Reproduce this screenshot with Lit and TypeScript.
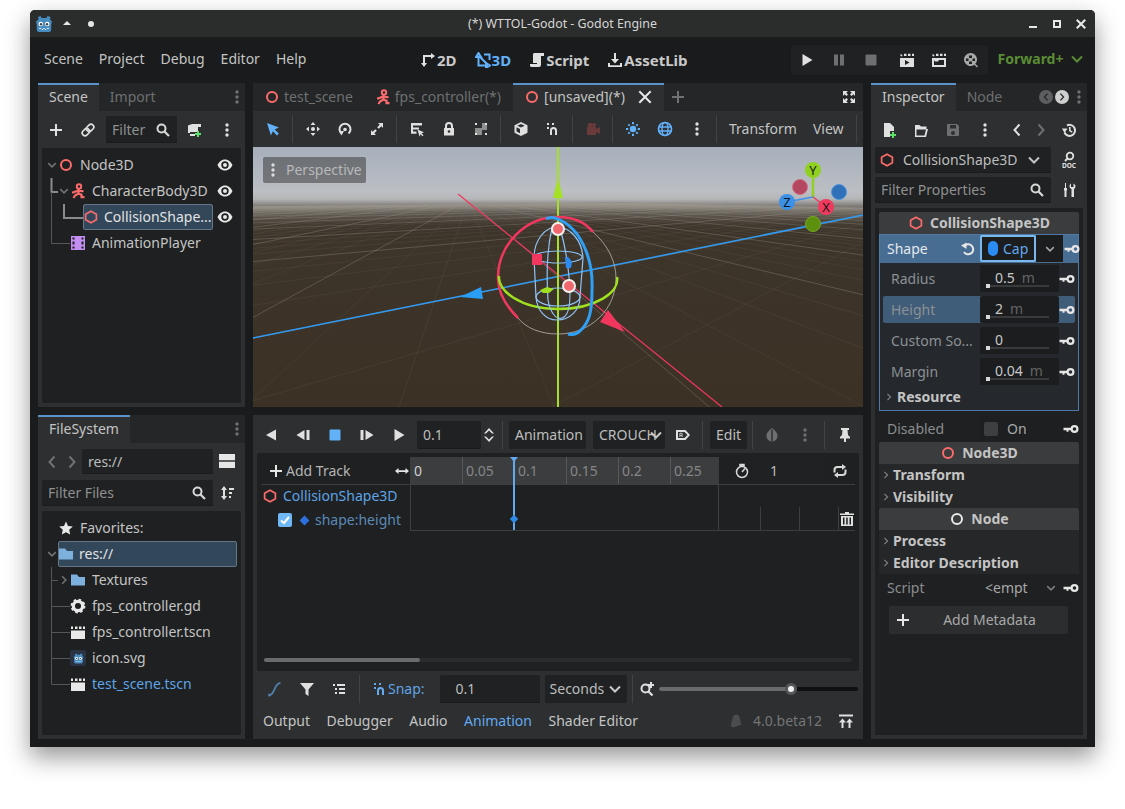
import { LitElement, css, html, svg } from 'lit';
import { customElement } from 'lit/decorators.js';

// icons, all on a 16x16 box
const I = {
  plus: svg`<path d="M7 2h2v5h5v2H9v5H7V9H2V7h5z"/>`,
  link: svg`<g transform="rotate(-45 8 8)" fill="none" stroke="currentColor" stroke-width="1.7"><rect x="1" y="5.2" width="8" height="5.6" rx="2.8"/><rect x="7" y="5.2" width="8" height="5.6" rx="2.8"/></g>`,
  search: svg`<circle cx="6.5" cy="6.5" r="4" fill="none" stroke="currentColor" stroke-width="2"/><path d="M9.5 9.5l4.5 4.5" stroke="currentColor" stroke-width="2.2" fill="none"/>`,
  dots: svg`<circle cx="8" cy="3" r="1.7"/><circle cx="8" cy="8" r="1.7"/><circle cx="8" cy="13" r="1.7"/>`,
  scrollAdd: svg`<path d="M5 2h9v3h-3v5H3V11H1V3.500zM3 12h5v2H3z"/><path fill="#5fe06a" d="M10 9h2v2h2v2h-2v2h-2v-2H8v-2h2z"/>`,
  eye: svg`<path fill-rule="evenodd" d="M8 2.500C4.500 2.500 1.800 5 .5 8c1.300 3 4 5.500 7.500 5.500S14.200 11 15.500 8C14.200 5 11.500 2.500 8 2.500zm0 1.800a3.700 3.700 0 110 7.400 3.700 3.700 0 010-7.400zm0 1.700a2 2 0 100 4 2 2 0 000-4z"/>`,
  ring: svg`<circle cx="8" cy="8" r="5" fill="none" stroke="currentColor" stroke-width="2"/>`,
  hex: svg`<path d="M8 2.200l5.400 3v5.600L8 13.800l-5.400-3V5.200z" fill="none" stroke="currentColor" stroke-width="1.700"/>`,
  body: svg`<circle cx="9" cy="3.500" r="2.200" fill="none" stroke="currentColor" stroke-width="2"/><path d="M8.500 6v4.500M2 9.500c2.500 0 3.500-1.700 6.500-1.700 2 0 3 .7 5 .2M8.500 10.500L5 12.500l-1.500 2.500M8.500 10.500l3 1.200 0 2.500 3 0" fill="none" stroke="currentColor" stroke-width="2.200"/>`,
  film: svg`<path fill-rule="evenodd" d="M1 1h14v14H1zm1.500 1.500v2h2v-2zm0 4v3h2v-3zm0 5v2h2v-2zm9-9v2h2v-2zm0 4v3h2v-3zm0 5v2h2v-2z"/>`,
  select: svg`<path d="M2 2l12 4.500-4.300 2 4.100 4.100-1.800 1.800-4.100-4.100-2 4.300z"/>`,
  move: svg`<circle cx="8" cy="8" r="2"/><path d="M8 1l2.500 3h-5zM8 15l-2.500-3h5zM1 8l3-2.500v5zM15 8l-3 2.500v-5z"/>`,
  rotate: svg`<path d="M4.500 12.500A5.500 5.500 0 1 1 11.500 12.500" fill="none" stroke="currentColor" stroke-width="2"/><circle cx="8" cy="8.500" r="1.800"/><path d="M2 10h5l-2.500 4.500z"/>`,
  scale: svg`<path d="M9 2h5v5l-1.700-1.700-2.500 2.500-1.600-1.600 2.500-2.500zM7 14H2V9l1.700 1.700 2.500-2.500 1.600 1.600-2.500 2.500z"/>`,
  listSel: svg`<path d="M2 2h11v2.500H4v2h6v2H4v2h3.500v2.200H2z"/><path d="M8.500 8.500l6.500 2.800-2.500 1 2 2-1 1-2-2-1 2.500z"/>`,
  lock: svg`<path d="M3 7h10v7.500H3z"/><path d="M5 7.500V5a3 3 0 016 0v2.500" fill="none" stroke="currentColor" stroke-width="2"/><circle cx="8" cy="10.500" r="1.300" fill="#2d2f30"/>`,
  group: svg`<path d="M2 7h7V2h5v7H9v5H2z" opacity=".55"/><path d="M2 2h2v2H2zM12 12h2v2h-2zM12 2h2v2h-2zM2 12h2v2H2z"/>`,
  cube: svg`<path fill-rule="evenodd" d="M8 1l6.500 3.200v7.600L8 15l-6.500-3.200V4.200zM4.300 4.700L8 6.600l3.700-1.900L8 3zM3.500 6.300v4.200l3.500 1.700V8z"/>`,
  snap: svg`<path d="M6 14V9.500a2.500 2.500 0 015 0V14" fill="none" stroke="currentColor" stroke-width="2"/><path d="M2 2h2v2H2zM7 2h2v2H7zM2 6h2v2H2z"/>`,
  cam: svg`<path d="M2 6h9v8H2zM11 8l4-2v7l-4-2z"/><circle cx="5" cy="4" r="2.300"/><circle cx="9" cy="4" r="2"/>`,
  sun: svg`<circle cx="8" cy="8" r="3.200"/><path d="M7 1h2v2.200H7zM7 12.800h2V15H7zM1 7h2.200v2H1zM12.800 7H15v2h-2.200zM2.700 4l1.300-1.300 1.400 1.400-1.300 1.300zM10.600 11.900l1.300-1.300 1.400 1.400-1.300 1.300zM2.700 12l1.400-1.400 1.300 1.300L4 13.300zM10.600 4.100L12 2.700 13.300 4l-1.400 1.400z"/>`,
  globe: svg`<g fill="none" stroke="currentColor" stroke-width="1.400"><circle cx="8" cy="8" r="6.500" stroke-width="1.700"/><ellipse cx="8" cy="8" rx="3" ry="6.500"/><path d="M1.500 6h13M1.500 10h13"/></g>`,
  full: svg`<path d="M2 2h5L5.300 3.700 7 5.400 5.400 7 3.700 5.300 2 7zM14 2v5l-1.700-1.700L10.600 7 9 5.400l1.700-1.700L9 2zM2 14V9l1.700 1.700L5.400 9 7 10.600l-1.700 1.700L7 14zM14 14H9l1.700-1.700L9 10.600l1.600-1.600 1.700 1.700L14 9z"/>`,
  close: svg`<path d="M3 1.600L8 6.600l5-5L14.400 3l-5 5 5 5-1.400 1.400-5-5-5 5L1.600 13l5-5-5-5z"/>`,
  play: svg`<path d="M3.500 2l10 6-10 6z"/>`,
  pause: svg`<path d="M3 2.500h4v11H3zM9 2.500h4v11H9z"/>`,
  stop: svg`<rect x="2.500" y="2.500" width="11" height="11" rx="1"/>`,
  clapPlay: svg`<path d="M1 6h14v9H1zM1.500 2l2 1-.5 1.500-1.500-.5zM5 1.800h2.500V4H5zM9 1.800h2.500V4H9zM13 1.800h2V4h-2z"/><path fill="#1f2122" d="M6 8l4.500 2.500L6 13z"/>`,
  clapOpen: svg`<path fill-rule="evenodd" d="M1 6h14v9H1zm2 2v5h10V8H8L7 9.500H4z"/><path d="M1.500 2l2 1-.5 1.500-1.500-.5zM5 1.800h2.500V4H5zM9 1.800h2.500V4H9zM13 1.800h2V4h-2z"/>`,
  clap: svg`<path d="M1 6.500h14V15H1zM1 2.500h2v2.500H1zM5 2.500h2.500V5H5zM9 2.500h2.500V5H9zM13 2.500h2V5h-2z"/>`,
  reel: svg`<path fill-rule="evenodd" d="M7.500 1a6.500 6.500 0 103.800 11.800l2.700 2.700 1-1-2.700-2.700A6.500 6.500 0 007.500 1zM6 3.500h3v2.500H6zm-3 3h2.500v2.500H3zm6.500 0H12v2.500H9.500zM6 9.500h3V12H6z"/>`,
  newFile: svg`<path d="M3 1h6l4 4v4H9v6H3z"/><path fill="#5fe06a" d="M11 10h2v2h2v2h-2v2h-2v-2H9v-2h2z"/>`,
  folderOpen: svg`<path fill-rule="evenodd" d="M2 3h4.500l1.500 1.500h5.500V7H15l-2 8H2zm1.500 4.500v6h8l1.500-6H7z"/>`,
  save: svg`<path fill-rule="evenodd" d="M2 3a1 1 0 011-1h9l2 2v9a1 1 0 01-1 1H3a1 1 0 01-1-1zm3 0v3.500h6V3zm3 6a2 2 0 100 4 2 2 0 000-4z"/>`,
  left: svg`<path d="M10.500 2.500L5.500 8l5 5.500" fill="none" stroke="currentColor" stroke-width="2"/>`,
  right: svg`<path d="M5.500 2.500l5 5.500-5 5.500" fill="none" stroke="currentColor" stroke-width="2"/>`,
  history: svg`<path d="M3.500 10.500A5.500 5.500 0 106 3.500" fill="none" stroke="currentColor" stroke-width="2"/><path d="M1 6.500h5.500L3.500 11zM8 5h1.600v3.200l2 1.300-.8 1.200L8 9z"/>`,
  tools: svg`<path d="M4 1h1v5h1v2L5.500 9v6h-2V9L3 8V6h1zM10 1.500V5h2.500V1.500C14.500 2.500 15 4.500 14 6l-1 1.200V15h-2.500V7.200L9 6C8 4.500 8.500 2.500 10 1.500z"/>`,
  revert: svg`<path d="M5 4.500A5 5 0 1 1 4 11" fill="none" stroke="currentColor" stroke-width="2"/><path d="M1 4.500l5.500-3v6.500z"/>`,
  key: svg`<path fill-rule="evenodd" d="M11.500 4a4 4 0 100 8 4 4 0 000-8zm0 2.200a1.800 1.800 0 110 3.600 1.800 1.800 0 010-3.600z"/><path d="M.5 6.800h8v2.400h-3v1.500h-2V9.200h-3z"/>`,
  star: svg`<path d="M8 1.500l2 4.500 4.800.5-3.600 3.200 1 4.800L8 12.200l-4.200 2.300 1-4.800L1.200 6.500 6 6z"/>`,
  folder: svg`<path d="M1 2.500h6l2 2.500h6v8.500H1z"/>`,
  gear: svg`<circle cx="8" cy="8" r="4.700" fill="none" stroke="currentColor" stroke-width="3.300"/><circle cx="8" cy="8" r="6.400" fill="none" stroke="currentColor" stroke-width="2" stroke-dasharray="2.500 2.500"/>`,
  sort: svg`<path d="M5 1l3 4H6v6h2l-3 4-3-4h2V5H2zM10 3h5v2h-5zM10 7h3v2h-3zM10 11h2v2h-2z"/>`,
  split: svg`<path d="M0 1h16v6.300H0zM0 8.700h16V15H0z"/>`,
  chevDown: svg`<path d="M3 5.500l5 5 5-5" fill="none" stroke="currentColor" stroke-width="2"/>`,
  chevRight: svg`<path d="M5.500 3l5 5-5 5" fill="none" stroke="currentColor" stroke-width="2"/>`,
  start: svg`<path d="M13 2.500v11L3 8z"/>`,
  prevFrame: svg`<path d="M9.500 3v10L1.500 8zM11.500 3h3v10h-3z"/>`,
  nextFrame: svg`<path d="M6.500 3v10l8-5zM1.500 3h3v10h-3z"/>`,
  updown: svg`<path d="M8 1l5 5.500h-2L8 3.500 5 6.500H3zM8 15l-5-5.500h2l3 3 3-3h2z"/>`,
  tag: svg`<path fill-rule="evenodd" d="M1 3h9.500L15 8l-4.500 5H1zm2 2v6h6.500l3-3-3-3zM4.500 10V6.500A1 1 0 015.500 5.800h1a1 1 0 011 .7V10H6.700V8.800H5.300V10zm.8-2h1.400V6.600H5.300z"/>`,
  onion: svg`<path d="M8 1c3 2.500 5.500 4.500 5.500 8 0 3-2.500 5.500-5.500 5.500S2.500 12 2.500 9C2.500 5.500 5 3.500 8 1z"/><path d="M8 2.500v12" stroke="#2d2f30" stroke-width="1.500"/>`,
  pin: svg`<path d="M4 1h8v2h-1.500l.5 5 2 2v1.500H3V10l2-2 .5-5H4zM7 11.500h2V15H7z"/>`,
  watch: svg`<circle cx="8" cy="9" r="5.500" fill="none" stroke="currentColor" stroke-width="1.500"/><path d="M6 1.500h4V3H6zM8 9l3-3.500" fill="none" stroke="currentColor" stroke-width="1.500"/>`,
  loop: svg`<path d="M2.500 9.500V7a3 3 0 013-3H11" fill="none" stroke="currentColor" stroke-width="2"/><path d="M10 1l4 3-4 3z"/><path d="M13.500 6.500V9a3 3 0 01-3 3H5" fill="none" stroke="currentColor" stroke-width="2"/><path d="M6 9l-4 3 4 3z"/>`,
  resize: svg`<path d="M0 8l4-3.500v2.500h8V4.500L16 8l-4 3.500V9H4v2.500z"/>`,
  trash: svg`<path d="M6 1h4v1.500h5V4H1V2.500h5zM2 5h12v10H2zm2 1.500v7h1.500v-7zm3.200 0v7h1.500v-7zm3.300 0v7H12v-7z" fill-rule="evenodd"/>`,
  bezier: svg`<path d="M2.500 14C8 14 7 2 13.500 2" fill="none" stroke="currentColor" stroke-width="1.800"/><circle cx="2.500" cy="14" r="1.500"/>`,
  funnel: svg`<path d="M1 2h14L9.500 8.500V15l-3-2V8.500z"/>`,
  treeList: svg`<path d="M2 3h2v2H2zM6 3h8v2H6zM4 7h2v2H4zM8 7h6v2H8zM4 11h2v2H4zM8 11h6v2H8z"/>`,
  zoom: svg`<circle cx="6.500" cy="7.500" r="4" fill="none" stroke="currentColor" stroke-width="2"/><path d="M9.500 10.500l4 4" stroke="currentColor" stroke-width="2.200"/><path d="M11 1h2v2h2v2h-2v2h-2V5H9V3h2z"/>`,
  bell: svg`<path d="M8 1.500c3 0 4 2.500 4 5.500l1.500 4.500-8 3-3-1.500C4 10 3.500 2 8 1.500z"/>`,
  expand: svg`<path d="M1 1.500h14v2H1zM4.500 5.500L8 9.500H5.500V15h-2V9.500H1zM11.500 5.500L15 9.500h-2.500V15h-2V9.500H8z"/>`,
  icon2d: svg`<path d="M4 13.500V4h7.500" fill="none" stroke="currentColor" stroke-width="2"/><path d="M11 1l4 3-4 3zM1 11h6l-3 4z"/>`,
  icon3d: svg`<path d="M3.500 3.500L12 12M3.500 4v9.500H13" fill="none" stroke="currentColor" stroke-width="2"/><path d="M1 5l2.500-4L6 5zM11 16v-5l4 2.500zM9 2.500h5.500V8" fill="none" stroke="currentColor" stroke-width="2"/>`,
  scroll: svg`<path d="M5 1h10v3h-3v9a2 2 0 01-2 2H2.500A1.500 1.500 0 011 13.500V12h7v-1H4V3a2 2 0 011-2z"/>`,
  download: svg`<path d="M7 1h2v6h3l-4 4.500L4 7h3zM1 11h2v2.200h10V11h2v4H1z"/>`,
};

const ic = (body: unknown, size = 16) => html`<svg class="ic" width=${size} height=${size} viewBox="0 0 16 16">${body}</svg>`;
const ib = (body: unknown, cls = '') => html`<span class="ib ${cls}">${ic(body)}</span>`;

const godot = (size: number) => html`<svg width=${size} height=${size} viewBox="0 0 18 18">
  <path fill="#478cbf" d="M5.500 1l1.200 2h4.600l1.200-2 3 1-.5 2.500L17 6.500l-.8 3.500v4.500q0 2-2 2.500H3.800q-2-.5-2-2.500V10L1 6.500l2.500-2L3 2z"/>
  <circle cx="5.800" cy="9" r="2.300" fill="#fff"/><circle cx="12.200" cy="9" r="2.300" fill="#fff"/>
  <circle cx="6" cy="9.200" r="1.200" fill="#414042"/><circle cx="12" cy="9.200" r="1.200" fill="#414042"/>
  <path d="M4 13.500h2l1 1h1l.5-1h1l.5 1h1l1-1h2" fill="none" stroke="#cfe3f3" stroke-width="1"/>
</svg>`;

// ground grid of the viewport: a real projection, camera looks at the origin
function groundGrid(): { near: string; far: string } {
  const f = 169, cx = 558, cy = 277, d = 3.25;
  const a = 0.45, p = 0.428;
  const ca = Math.cos(a), sa = Math.sin(a), cp = Math.cos(p), sp = Math.sin(p);
  const camX = -d * cp * sa, camZ = -d * cp * ca, camY = d * sp;
  const view = (x: number, z: number) => {
    const rx = x - camX, ry = -camY, rz = z - camZ;
    return {
      r: rx * ca - rz * sa,
      u: rx * sa * sp + ry * cp + rz * ca * sp,
      f: rx * sa * cp - ry * sp + rz * ca * cp,
    };
  };
  const seg = (x0: number, z0: number, x1: number, z1: number) => {
    let A = view(x0, z0), B = view(x1, z1);
    if (A.f < 0.1 && B.f < 0.1) return '';
    const clip = (P: typeof A, Q: typeof A) => {
      const t = (0.1 - P.f) / (Q.f - P.f);
      return { r: P.r + (Q.r - P.r) * t, u: P.u + (Q.u - P.u) * t, f: 0.1 };
    };
    if (A.f < 0.1) A = clip(A, B);
    if (B.f < 0.1) B = clip(B, A);
    const n = (v: number) => v.toFixed(1);
    return `M${n(cx + f * A.r / A.f)} ${n(cy - f * A.u / A.f)}L${n(cx + f * B.r / B.f)} ${n(cy - f * B.u / B.f)}`;
  };
  let near = '', far = '';
  const R = 64;
  for (let i = -R; i <= R; i += 1) {
    const big = i % 4 === 0;
    const line = seg(i, -R, i, R) + seg(-R, i, R, i);
    if (big) near += line; else far += line;
  }
  return { near, far };
}

const GRID = groundGrid();

@customElement('app-root')
export class AppRoot extends LitElement {
  static styles = css`
    :host { display: block; width: 1125px; height: 809px; background: #fff; padding: 10px 30px 0; box-sizing: border-box; font: 14px/20px "Noto Sans", sans-serif; color: #c4c4c4; overflow: hidden; }
    * { box-sizing: border-box; }
    .window { width: 1065px; height: 737px; background: #191b1c; border-radius: 5px 5px 0 0; box-shadow: 0 10px 24px rgba(0,0,0,.42); display: flex; flex-direction: column; }
    .ic { display: block; fill: currentColor; flex: none; }
    .ib { width: 32px; height: 32px; display: flex; align-items: center; justify-content: center; flex: none; color: #e0e0e0; }
    .ib.w16 { width: 16px; }
    .ib.w24 { width: 24px; }
    .ib.blue { color: #62b1f9; }
    .ib.dim { color: #6d6f70; }
    .sep { width: 1px; height: 28px; background: #414344; margin: 0 4px 0 3px; flex: none; }

    .title { height: 27px; background: #2b2c2c; border-radius: 5px 5px 0 0; display: grid; grid-template-columns: 1fr auto 1fr; align-items: center; font-size: 12.4px; color: #d6d6d6; }
    .title-l { display: flex; align-items: center; padding-left: 5px; color: #e6e6e6; }
    .title-l svg:first-child { margin-right: 6px; }
    .title-l .ic { margin-right: 8px; }
    .title-r { display: flex; justify-content: flex-end; align-items: center; gap: 8px; padding-right: 6px; color: #e6e6e6; }

    .menu { height: 46px; display: flex; align-items: center; flex: none; }
    .menus { width: 390px; padding-left: 14px; display: flex; gap: 16px; flex: none; margin-top: -3px; }
    .main-btns { display: flex; gap: 18px; flex: none; font-weight: 700; font-size: 15px; color: #c9c9c9; }
    .main-btn { display: flex; align-items: center; gap: 1px; }
    .main-btn .ic { color: #e0e0e0; }
    .main-btn.on, .main-btn.on .ic { color: #62b1f9; }
    .run { margin-left: 103px; width: 197px; height: 30px; background: #1f2122; border-radius: 3px; display: flex; align-items: center; flex: none; }
    .run .ib { height: 30px; }
    .run .gap { width: 4px; }
    .renderer { margin-left: 10px; display: flex; align-items: center; gap: 6px; color: #5b8b35; font-weight: 700; margin-top: -2px; }

    .grid { display: grid; grid-template-columns: 207px 610px 216px; grid-template-rows: 324px 324px; gap: 8px; padding: 0 8px; }
    .dock { background: #2d2f30; display: flex; flex-direction: column; min-height: 0; min-width: 0; position: relative; }
    .tabs { height: 28px; background: #242627; display: flex; align-items: center; flex: none; position: relative; }
    .tab { height: 28px; padding: 0 11px; display: flex; align-items: center; color: #6e7071; gap: 4px; flex: none; }
    .tab.on { background: #2d2f30; color: #c4c4c4; box-shadow: inset 0 2px 0 #5a93c9; }
    .tabs .more { margin-left: auto; color: #6f7172; width: 16px; margin-right: 0; }
    .tabs .ic.red, .red { color: #fc6b6b; }

    .bar { display: flex; align-items: center; flex: none; }
    .field { background: #1f2122; border-radius: 2px; box-shadow: inset 0 -1px 0 #191a1b; height: 26px; display: flex; align-items: center; padding: 0 6px; color: #8f9091; flex: none; }
    .field > .ic { margin-left: auto; color: #d8d8d8; }

    .tree { flex: 1; background: #1e2021; border-radius: 2px; margin: 0 4px 4px; padding-top: 4px; position: relative; min-height: 0; }
    .lines { position: absolute; left: 0; top: 0; width: 100%; height: 100%; pointer-events: none; }
    .row { height: 26px; display: flex; align-items: center; position: relative; }
    .chev { width: 12px; height: 12px; flex: none; color: #737475; }
    .lead { flex: none; }
    .row .tx { margin-left: 6px; white-space: nowrap; overflow: hidden; }
    .row .eye { margin-left: auto; margin-right: 8px; color: #e8e8e8; }
    .cell { display: flex; align-items: center; flex: 1; height: 26px; min-width: 0; }
    .cell.sel { background: #33475b; border: 1px solid #667686; border-radius: 2px; color: #e2e2e2; margin-right: 4px; }
    .cell.sel .lead { margin-left: -1px; }
    .cell.sel .tx { margin-left: 5px; }
    .white { color: #e8e8e8; }
    .folder { color: #7eb0de; }
    .film { color: #c38ef1; }
    .linktx { color: #5fa4e6; }

    .scene-bar { height: 37px; padding-left: 2px; }
    .scene-filter { width: 71px; margin: 0 2px; height: 27px; }
    .fs-path { height: 37px; padding-left: 4px; padding-top: 6px; align-items: flex-start; }
    .fs-path .ib { height: 25px; width: 20px; color: #6f7172; }
    .fs-path .field { width: 131px; height: 25px; color: #bdbdbd; }
    .split { color: #e6e6e6; margin-left: 6px; margin-top: 4px; }
    .fs-filter { height: 31px; padding: 0 0 5px 4px; }
    .fs-filter .field { width: 171px; }
    .fs-filter .sort { width: 28px; display: flex; justify-content: center; color: #e0e0e0; }
    .thumb { width: 16px; height: 16px; background: #2a3344; border-radius: 2px; display: flex; align-items: center; justify-content: center; flex: none; }

    .center { grid-column: 2; grid-row: 1; }
    .tabs .plus { color: #6f7172; margin-left: 2px; }
    .tabs .full { margin-left: auto; color: #e0e0e0; margin-right: -2px; }
    .tab.t-fps { padding: 0 12px 0 11px; }
    .t-name { width: 89px; }
    .tool3d { height: 36px; padding-left: 4px; }
    .menu-btn { padding: 0 8px; flex: none; }
    .vp { flex: 1; position: relative; min-height: 0; overflow: hidden; }
    .vp svg.scene { position: absolute; left: 0; top: 0; }
    .persp { position: absolute; left: 10px; top: 10px; width: 103px; height: 26px; background: rgba(60,60,60,.55); border-radius: 2px; display: flex; align-items: center; color: #b8b9ba; }
    .persp .ic { margin: 0 5px 0 2px; color: #dcdcdc; }

    .anim { grid-column: 2; grid-row: 2; }
    .anim-bar { height: 34px; padding: 6px 0 0 2px; }
    .anim-bar .ib { height: 28px; }
    .anim-bar .sep { height: 28px; }
    .time { width: 64px; height: 28px; margin-left: 2px; padding-left: 6px; color: #bdbdbd; }
    .sbtn { height: 28px; background: #1f2122; border-radius: 2px; padding: 0 6px; display: flex; align-items: center; flex: none; color: #bdbdbd; }
    .sbtn.a { width: 77px; }
    .sbtn.c { margin: 0 2px 0 7px; width: 72px; overflow: hidden; position: relative; }
    .sbtn.c span { position: absolute; left: 55px; top: 6px; color: #c8c8c8; }
    .sbtn.e { width: 37px; }
    .tracks { margin: 4px 4px 0; height: 218px; background: #1e2021; border-radius: 2px; padding: 4px 4px 0; position: relative; display: flex; flex-direction: column; flex: none; }
    .thead { display: flex; height: 28px; border-bottom: 1px solid #3c3e3f; flex: none; }
    .add { width: 149px; flex: none; display: flex; align-items: center; padding-left: 7px; gap: 2px; color: #b5b5b5; }
    .add .ic { color: #e6e6e6; }
    .add .rs { margin-left: auto; margin-right: 1px; }
    .ruler { display: flex; background: #3c3d3e; flex: none; width: 309px; }
    .tick { width: 52px; flex: none; border-left: 1px solid #575859; padding-left: 3px; color: #858687; line-height: 27px; }
    .tick.last { width: 49px; }
    .tick.zero { color: #cfcfcf; border-left: 0; padding-left: 4px; }
    .thead-r { display: flex; align-items: center; flex: 1; color: #d8d8d8; }
    .thead-r .watch { width: 34px; display: flex; justify-content: center; padding-left: 11px; }
    .len { width: 69px; height: 26px; background: #1f2122; padding-left: 17px; display: flex; align-items: center; color: #bdbdbd; }
    .thead-r .lp { margin-left: 10px; }
    .trow { display: flex; flex: none; }
    .tleft { width: 150px; border-right: 1px solid #3c3e3f; display: flex; align-items: center; flex: none; }
    .tgroup { height: 22px; }
    .tgroup .tleft { padding-left: 1px; gap: 5px; }
    .ttrack { height: 24px; }
    .ttrack .tleft { padding: 2px 0 0 17px; }
    .ttrack .name { color: #5b8ab8; margin-left: 7px; }
    .ttrack .span, .ttrack .rest { border-bottom: 1px solid #3c3e3f; }
    .check { width: 14px; height: 14px; background: #70b8f5; border-radius: 2px; display: flex; align-items: center; justify-content: center; }
    .diamond { width: 7px; height: 7px; background: #2e6fe0; transform: rotate(45deg); margin-left: 9px; flex: none; }
    .span { flex: none; border-right: 1px solid #3c3e3f; height: 100%; }
    .s308 { width: 308px; }
    .s42 { width: 42px; }
    .s39 { width: 39px; }
    .rest { flex: 1; display: flex; align-items: center; justify-content: flex-end; color: #e0e0e0; }
    .play-head { position: absolute; left: 256px; top: 4px; height: 73px; width: 2px; background: #62a9f0; }
    .play-head::before { content: ""; position: absolute; left: -3px; top: 0; border: 4px solid transparent; border-top: 5px solid #62a9f0; }
    .key-dot { position: absolute; left: 254px; top: 63px; width: 6px; height: 6px; background: #2e8ae6; transform: rotate(45deg); }
    .hscroll { margin: auto 3px 9px; height: 4px; background: #2a2c2d; border-radius: 2px; flex: none; }
    .hscroll i { display: block; height: 4px; width: 156px; background: #6a6b6c; border-radius: 2px; }
    .anim-foot { height: 34px; padding: 2px 0 0 6px; color: #5fa4e6; }
    .anim-foot .ib { width: 32px; }
    .anim-foot .snap-ic { width: 28px; margin-right: -6px; color: #62a9f0; }
    .anim-foot .zoom-ic { width: 24px; }
    .snap-v { width: 100px; height: 28px; margin-left: 15px; padding-left: 16px; color: #bdbdbd; }
    .secs { width: 82px; height: 28px; margin-left: 5px; padding-left: 5px; background: #1f2122; border-radius: 2px; display: flex; align-items: center; color: #bdbdbd; gap: 3px; flex: none; }
    .secs .ic { color: #c8c8c8; }
    .slider { width: 199px; height: 4px; background: #0f1010; border-radius: 2px; position: relative; flex: none; }
    .slider i { display: block; width: 131px; height: 4px; background: #6a6b6c; border-radius: 2px; }
    .slider b { position: absolute; left: 126px; top: -4px; width: 12px; height: 12px; border-radius: 50%; background: #f0f0f0; border: 3px solid #565758; }
    .bottom { display: flex; align-items: center; height: 28px; padding-left: 10px; gap: 16.5px; margin-top: 2px; }
    .bottom .on { color: #62a9f0; }
    .bottom .ver { margin-left: auto; color: #747576; display: flex; align-items: center; gap: 9px; }
    .bottom .ver .ic:first-child { color: #4a4c4d; }
    .bottom .ver .ic:last-child { color: #e0e0e0; margin-left: 7px; margin-right: 9px; }

    .insp { grid-column: 3; grid-row: 1 / 3; }
    .insp .tabs .hist { display: flex; align-items: center; margin-left: auto; gap: 0; }
    .round { width: 14px; height: 14px; border-radius: 50%; background: #5c5e5f; margin-right: 2px; display: flex; align-items: center; justify-content: center; color: #242627; }
    .round.b { background: #cfcfcf; }
    .insp-bar { height: 36px; padding: 2px 0 0 2px; }
    .ib.hist-btn { margin-left: 8px; width: 24px; }
    .wide { display: flex; align-items: center; padding-left: 4px; height: 26px; margin-bottom: 4px; flex: none; }
    .wide .field { width: 176px; }
    .wide .doc { width: 36px; display: flex; justify-content: center; color: #e0e0e0; }
    .wide .field.node { color: #bdbdbd; padding-left: 4px; }
    .wide .field.node .red { margin-right: 8px; }
    .wide .field.node > .ic { color: #c4c4c4; margin-right: 3px; }
    .props { flex: 1; margin: 1px 4px 4px; background: #1e2021; padding: 4px; min-height: 0; }
    .head { height: 22px; background: #3a3c3d; border-radius: 2px 2px 0 0; display: flex; align-items: center; justify-content: center; gap: 6px; font-weight: 700; color: #c4c4c4; }
    .group { border: 1px solid #4d7aa6; background: #25292d; margin-bottom: 5px; }
    .shape { height: 28px; padding: 0 0 1px 7px; background: #476d92; display: flex; align-items: center; color: #e4e8ec; margin-bottom: 2px; }
    .shape .lbl { width: 73px; flex: none; }
    .shape .rv { width: 16px; color: #e6e6e6; margin-right: 4px; flex: none; }
    .cap { width: 56px; height: 27px; background: #1b1d1e; border: 2px solid #7ab8ef; border-radius: 2px; display: flex; align-items: center; padding-left: 6px; gap: 5px; color: #62a9f0; flex: none; }
    .pill { width: 10px; height: 15px; background: #2a8bf2; border-radius: 5px; flex: none; }
    .dd { width: 27px; height: 27px; background: #1b1d1e; display: flex; align-items: center; justify-content: center; color: #a8a8a8; flex: none; }
    .keyic { flex: none; margin-left: 1px; color: #e6e6e6; }
    .prow { margin: 0 3px 4px; height: 27px; display: flex; align-items: center; border-radius: 2px; color: #8c9094; }
    .prow.hover { background: #3f5d79; }
    .prow .lbl { width: 97px; padding-left: 8px; flex: none; white-space: nowrap; }
    .prow .keyic { margin-left: 0; }
    .val { width: 79px; height: 27px; background: #1b1d1e; border-radius: 2px; position: relative; padding-left: 15px; display: flex; align-items: center; gap: 7px; color: #c8c8c8; flex: none; margin-top: -1px; }
    .val small { font-size: 14px; color: #636465; }
    .val::before { content: ""; position: absolute; left: 7px; bottom: 5px; width: 62px; height: 2px; background: #393a3b; }
    .val::after { content: ""; position: absolute; left: 6px; bottom: 4px; width: 4px; height: 4px; background: #d8d8d8; }
    .res { height: 26px; display: flex; align-items: center; padding-left: 4px; font-weight: 700; margin-top: -5px; gap: 3px; }
    .chv { color: #7d7e7f; }
    .disabled { height: 26px; display: flex; align-items: center; padding-left: 8px; color: #8c8d8e; }
    .disabled .lbl { width: 92px; flex: none; }
    .on-box { width: 84px; height: 26px; background: #1d1f20; display: flex; align-items: center; padding-left: 5px; gap: 9px; flex: none; color: #a8a8a8; }
    .cb { width: 14px; height: 14px; background: #3d3f40; border-radius: 2px; }
    .keyic.m { margin-left: 0; }
    .sec { background: #252728; }
    .sec div { height: 22px; display: flex; align-items: center; padding-left: 2px; gap: 2px; font-weight: 700; }
    .script { height: 26px; display: flex; align-items: center; padding-left: 8px; color: #8c8d8e; margin-top: 1px; }
    .script .lbl { width: 98px; flex: none; }
    .script .v { width: 60px; flex: none; color: #a8a8a8; }
    .script .ch { width: 18px; color: #7d7e7f; flex: none; }
    .meta { margin: 5px 0 0 10px; width: 179px; height: 28px; background: #2b2d2e; border-radius: 2px; display: flex; align-items: center; padding-left: 6px; color: #a8a8a8; }
    .meta span { flex: 1; text-align: center; }
    .meta .ic { color: #e6e6e6; }
  `;

  private treeLine(x0: number, y0: number, d: string, strong = false) {
    return svg`<path transform="translate(${-x0} ${-y0})" d=${d} fill="none" stroke=${strong ? '#8a8b8c' : '#555657'} stroke-width=${strong ? 2 : 1}/>`;
  }

  private sceneDock() {
    return html`<section class="dock">
      <div class="tabs">
        <div class="tab on">Scene</div><div class="tab">Import</div>
        <span class="ib more">${ic(I.dots)}</span>
      </div>
      <div class="bar scene-bar">
        ${ib(I.plus)}${ib(I.link)}
        <div class="field scene-filter">Filter${ic(I.search)}</div>
        ${ib(I.scrollAdd)}${ib(I.dots)}
      </div>
      <div class="tree">
        <svg class="lines">
          ${this.treeLine(42, 148, 'M51.500 178V192H58', true)}
          ${this.treeLine(42, 148, 'M51.500 192V243.500H70')}
          ${this.treeLine(42, 148, 'M64 204V218H83', true)}
        </svg>
        <div class="row" style="padding-left:4px">
          <span class="chev">${ic(I.chevDown, 12)}</span><span class="lead red">${ic(I.ring)}</span><span class="tx">Node3D</span>
          <span class="eye">${ic(I.eye)}</span>
        </div>
        <div class="row" style="padding-left:16px">
          <span class="chev">${ic(I.chevDown, 12)}</span><span class="lead red">${ic(I.body)}</span><span class="tx">CharacterBody3D</span>
          <span class="eye">${ic(I.eye)}</span>
        </div>
        <div class="row" style="padding-left:41px">
          <div class="cell sel"><span class="lead red">${ic(I.hex)}</span><span class="tx">CollisionShape...</span></div>
          <span class="eye" style="margin-left:0">${ic(I.eye)}</span>
        </div>
        <div class="row" style="padding-left:28px">
          <span class="lead film">${ic(I.film)}</span><span class="tx">AnimationPlayer</span>
        </div>
      </div>
    </section>`;
  }

  private fileDock() {
    const files = [
      { icon: html`<span class="lead white">${ic(I.gear)}</span>`, name: 'fps_controller.gd' },
      { icon: html`<span class="lead white">${ic(I.clap)}</span>`, name: 'fps_controller.tscn' },
      { icon: html`<span class="thumb">${godot(11)}</span>`, name: 'icon.svg' },
      { icon: html`<span class="lead white">${ic(I.clap)}</span>`, name: 'test_scene.tscn', cls: 'linktx' },
    ];
    return html`<section class="dock">
      <div class="tabs">
        <div class="tab on">FileSystem</div>
        <span class="ib more">${ic(I.dots)}</span>
      </div>
      <div class="bar fs-path">
        ${ib(I.left)}${ib(I.right)}
        <div class="field">res://</div>
        <span class="split">${ic(I.split)}</span>
      </div>
      <div class="bar fs-filter">
        <div class="field">Filter Files${ic(I.search)}</div>
        <span class="sort">${ic(I.sort)}</span>
      </div>
      <div class="tree">
        <svg class="lines">
          ${this.treeLine(42, 511, 'M51.500 567V684.500H70')}
          ${this.treeLine(42, 511, 'M51 580.500H58M51 606.500H70M51 632.500H70M51 658.500H70')}
        </svg>
        <div class="row" style="padding-left:16px">
          <span class="lead white">${ic(I.star)}</span><span class="tx">Favorites:</span>
        </div>
        <div class="row" style="padding-left:4px">
          <span class="chev">${ic(I.chevDown, 12)}</span>
          <div class="cell sel"><span class="lead folder">${ic(I.folder)}</span><span class="tx">res://</span></div>
        </div>
        <div class="row" style="padding-left:16px">
          <span class="chev">${ic(I.chevRight, 12)}</span><span class="lead folder">${ic(I.folder)}</span><span class="tx">Textures</span>
        </div>
        ${files.map(
          (f) => html`<div class="row" style="padding-left:28px">${f.icon}<span class="tx ${f.cls ?? ''}">${f.name}</span></div>`,
        )}
      </div>
    </section>`;
  }

  private viewport() {
    return html`<div class="vp">
      <svg class="scene" width="610" height="260" viewBox="253 147 610 260">
        <defs>
          <linearGradient id="env" x1="0" y1="147" x2="0" y2="407" gradientUnits="userSpaceOnUse">
            <stop offset="0" stop-color="#a6afbb"/>
            <stop offset=".17" stop-color="#bcbfc4"/>
            <stop offset=".2" stop-color="#b5b6b7"/>
            <stop offset=".245" stop-color="#5c564f"/>
            <stop offset=".3" stop-color="#3d352b"/>
            <stop offset="1" stop-color="#3c3125"/>
          </linearGradient>
          <clipPath id="ground"><rect x="253" y="201" width="610" height="206"/></clipPath>
        </defs>
        <rect x="253" y="147" width="610" height="260" fill="url(#env)"/>
        <g clip-path="url(#ground)" fill="none">
          <path d=${GRID.far} stroke="#8f8a82" stroke-opacity=".16" stroke-width=".7"/>
          <path d=${GRID.near} stroke="#a19c94" stroke-opacity=".4" stroke-width=".8"/>
        </g>
        <!-- axes -->
        <path d="M253 338L863 215" stroke="#2f9bf5" stroke-width="1.500"/>
        <path d="M458 194L722 407" stroke="#f2375f" stroke-width="1.200"/>
        <path d="M558 147V407" stroke="#a4e025" stroke-width="2"/>
        <path d="M558 177l5 21h-10z" fill="#a4e025"/>
        <path d="M460 297l21-10 2 12z" fill="#2a9df5"/>
        <path d="M625 332l-25-10 8-12z" fill="#f2375f"/>
        <!-- rotation rings -->
        <g fill="none">
          <path d="M593 232C608 245 616 262 616 278C616 310 590 334 558 334C540 334 526 328 518 318" stroke="#b9b5b0" stroke-width=".8"/>
          <path d="M518 318C505 305 498 292 498 278C498 245 525 217 558 217C572 217 585 222 593 232" stroke="#f2375f" stroke-width="2.500"/>
          <path d="M499 276C497 290 520 309 558 309C596 309 620 292 617 277" stroke="#9fe01f" stroke-width="2.500"/>
          <path d="M546 219C552 215 566 220 577 234C588 250 593 270 592 290C592 310 590 322 580 331C576 335 572 335 568 334" stroke="#2fa0f5" stroke-width="3"/>
          <g stroke="#8fc3f5" stroke-width="1.200">
            <ellipse cx="558" cy="257" rx="24" ry="6"/>
            <ellipse cx="558" cy="297" rx="22" ry="9"/>
            <path d="M534 258C534 240 545 227 557 227C570 227 582 240 583 258L580 297C580 310 570 320 557 320C545 320 537 310 536 297Z"/>
            <path d="M552 228C548 245 546 270 548 300C550 312 556 320 562 318C570 316 572 300 568 268C566 250 562 235 560 228"/>
          </g>
        </g>
        <rect x="532" y="254" width="10" height="11" fill="#f2375f"/>
        <path d="M565 257h3l2 2 2 3-1 6h-5z" fill="#2a8bf2"/>
        <path d="M540 290l7-3 7 2-5 4-6 0z" fill="#9fe01f"/>
        <circle cx="558" cy="229" r="6" fill="#f0686e" stroke="#f3f1ee" stroke-width="2"/>
        <circle cx="569" cy="286" r="6" fill="#f0686e" stroke="#f3f1ee" stroke-width="2"/>
        <!-- orientation gizmo -->
        <path d="M813 197V170" stroke="#8fd11e" stroke-width="2.500"/>
        <path d="M813 197L787 202" stroke="#3b90e8" stroke-width="1.500"/>
        <path d="M813 197L826 207" stroke="#ef3a5d" stroke-width="1.500"/>
        <circle cx="800" cy="187" r="7.500" fill="#b5465f" stroke="#cf6c82"/>
        <circle cx="839" cy="192" r="7.500" fill="#2f70b8" stroke="#4f93dc"/>
        <circle cx="813" cy="224" r="7.500" fill="#5e9010" stroke="#76a81e"/>
        <circle cx="813" cy="170" r="8" fill="#8fd11e"/>
        <circle cx="826" cy="207" r="8" fill="#ef3a5d"/>
        <circle cx="787" cy="202" r="8" fill="#3b90e8"/>
        <g font-family="Noto Sans" font-size="13" fill="#14181c" text-anchor="middle">
          <text x="813" y="175">Y</text><text x="826" y="212">X</text><text x="787" y="207">Z</text>
        </g>
      </svg>
      <div class="persp">${ic(I.dots)}<span>Perspective</span></div>
    </div>`;
  }

  private centerDock() {
    return html`<section class="dock center">
      <div class="tabs">
        <div class="tab"><span class="red">${ic(I.ring)}</span>test_scene</div>
        <div class="tab t-fps"><span class="red">${ic(I.body)}</span>fps_controller(*)</div>
        <div class="tab on"><span class="red">${ic(I.ring)}</span><span class="t-name">[unsaved](*)</span><span class="white">${ic(I.close)}</span></div>
        <span class="ib plus w24">${ic(I.plus)}</span>
        <span class="ib full">${ic(I.full)}</span>
      </div>
      <div class="bar tool3d">
        ${ib(I.select, 'blue')}<i class="sep"></i>
        ${ib(I.move)}${ib(I.rotate)}${ib(I.scale)}<i class="sep"></i>
        ${ib(I.listSel)}${ib(I.lock)}${ib(I.group)}<i class="sep"></i>
        ${ib(I.cube)}${ib(I.snap)}<i class="sep"></i>
        <span class="ib" style="color:#6b3a3a">${ic(I.cam)}</span><i class="sep"></i>
        ${ib(I.sun, 'blue')}${ib(I.globe, 'blue')}${ib(I.dots)}<i class="sep"></i>
        <span class="menu-btn">Transform</span>
        <span class="menu-btn">View</span>
        <i class="sep" style="margin-left:4px"></i>
      </div>
      ${this.viewport()}
    </section>`;
  }

  private animDock() {
    return html`<section class="dock anim">
      <div class="bar anim-bar">
        ${ib(I.start)}${ib(I.prevFrame)}<span class="ib blue">${ic(I.stop)}</span>${ib(I.nextFrame)}${ib(I.play)}
        <div class="field time">0.1</div>
        <span class="ib w16">${ic(I.updown)}</span>
        <i class="sep" style="margin:0 6px 0 5px"></i>
        <div class="sbtn a">Animation</div>
        <div class="sbtn c">CROUCH<span>${ic(I.chevDown)}</span></div>
        ${ib(I.tag)}
        <i class="sep" style="margin:0 7px 0 3px"></i>
        <div class="sbtn e">Edit</div>
        <i class="sep" style="margin:0 3px 0 5px"></i>
        <span class="ib dim">${ic(I.onion)}</span>
        <span class="ib dim" style="margin-left:1px">${ic(I.dots)}</span>
        <i class="sep"></i>
        ${ib(I.pin)}
      </div>
      <div class="tracks">
        <div class="thead">
          <div class="add">${ic(I.plus)}<span>Add Track</span><span class="rs">${ic(I.resize, 14)}</span></div>
          <div class="ruler">
            <span class="tick zero">0</span><span class="tick">0.05</span><span class="tick">0.1</span><span class="tick">0.15</span><span class="tick">0.2</span><span class="tick last">0.25</span>
          </div>
          <div class="thead-r">
            <span class="watch">${ic(I.watch)}</span>
            <span class="len">1</span>
            <span class="lp">${ic(I.loop)}</span>
          </div>
        </div>
        <div class="trow tgroup">
          <div class="tleft"><span class="red">${ic(I.hex)}</span><span class="linktx">CollisionShape3D</span></div>
          <span class="span s308"></span>
        </div>
        <div class="trow ttrack">
          <div class="tleft">
            <span class="check"><svg width="10" height="10" viewBox="0 0 10 10"><path d="M1 5.500l3 2.500 5-6" fill="none" stroke="#fff" stroke-width="2"/></svg></span>
            <i class="diamond"></i><span class="name">shape:height</span>
          </div>
          <span class="span s308"></span>
          <span class="span s42"></span>
          <span class="span s39"></span>
          <span class="span s39"></span>
          <span class="rest">${ic(I.trash)}</span>
        </div>
        <i class="play-head"></i><i class="key-dot"></i>
        <div class="hscroll"><i></i></div>
      </div>
      <div class="bar anim-foot">
        <span class="ib" style="color:#4f7fa8">${ic(I.bezier)}</span>${ib(I.funnel)}${ib(I.treeList)}
        <i class="sep" style="margin:0 6px 0 4px"></i>
        <span class="ib snap-ic">${ic(I.snap)}</span>
        <span>Snap:</span>
        <div class="field snap-v">0.1</div>
        <div class="secs"><span>Seconds</span>${ic(I.chevDown)}</div>
        <i class="sep" style="margin:0 2px 0 5px"></i>
        <span class="ib zoom-ic">${ic(I.zoom)}</span>
        <div class="slider"><i></i><b></b></div>
      </div>
      <div class="bottom">
        <span>Output</span><span>Debugger</span><span>Audio</span><span class="on">Animation</span><span>Shader Editor</span>
        <span class="ver">${ic(I.bell)}<span>4.0.beta12</span>${ic(I.expand)}</span>
      </div>
    </section>`;
  }

  private inspectorDock() {
    const props: Array<[string, string, string, string?]> = [
      ['Radius', '0.5', 'm'],
      ['Height', '2', 'm', 'hover'],
      ['Custom So...', '0', ''],
      ['Margin', '0.04', 'm'],
    ];
    return html`<section class="dock insp">
      <div class="tabs">
        <div class="tab on">Inspector</div><div class="tab">Node</div>
        <div class="hist">
          <span class="round">${ic(I.left, 10)}</span><span class="round b">${ic(I.right, 10)}</span>
          <span class="ib more">${ic(I.dots)}</span>
        </div>
      </div>
      <div class="bar insp-bar">
        ${ib(I.newFile)}${ib(I.folderOpen)}<span class="ib dim">${ic(I.save)}</span>${ib(I.dots)}
        ${ib(I.left)}<span class="ib w16 dim">${ic(I.right)}</span>
        <span class="ib hist-btn">${ic(I.history)}</span>
      </div>
      <div class="wide">
        <div class="field node"><span class="red">${ic(I.hex)}</span>CollisionShape3D${ic(I.chevDown)}</div>
        <span class="doc"><svg width="18" height="18" viewBox="0 0 18 18" fill="currentColor"><circle cx="10" cy="5" r="3.300" fill="none" stroke="currentColor" stroke-width="1.800"/><path d="M7.500 7.500L5 10" stroke="currentColor" stroke-width="2"/><text x="9" y="16.500" font-family="Noto Sans" font-size="6.500" font-weight="700" text-anchor="middle">DOC</text></svg></span>
      </div>
      <div class="wide">
        <div class="field">Filter Properties${ic(I.search)}</div>
        <span class="doc">${ic(I.tools)}</span>
      </div>
      <div class="props">
        <div class="head"><span class="red">${ic(I.hex)}</span>CollisionShape3D</div>
        <div class="group">
          <div class="shape">
            <span class="lbl">Shape</span>
            <span class="rv">${ic(I.revert)}</span>
            <span class="cap"><i class="pill"></i>Cap</span>
            <span class="dd">${ic(I.chevDown, 12)}</span>
            <span class="keyic">${ic(I.key)}</span>
          </div>
          ${props.map(
            ([label, value, unit, cls]) => html`<div class="prow ${cls ?? ''}">
              <span class="lbl">${label}</span>
              <span class="val">${value}${unit ? html`<small>${unit}</small>` : ''}</span>
              <span class="keyic">${ic(I.key)}</span>
            </div>`,
          )}
          <div class="res"><span class="chv">${ic(I.chevRight, 10)}</span>Resource</div>
        </div>
        <div class="disabled">
          <span class="lbl">Disabled</span>
          <span class="on-box"><i class="cb"></i>On</span>
          <span class="keyic m">${ic(I.key)}</span>
        </div>
        <div class="head"><span class="red">${ic(I.ring)}</span>Node3D</div>
        <div class="sec">
          <div><span class="chv">${ic(I.chevRight, 10)}</span>Transform</div>
          <div><span class="chv">${ic(I.chevRight, 10)}</span>Visibility</div>
        </div>
        <div class="head"><span class="white">${ic(I.ring)}</span>Node</div>
        <div class="sec">
          <div><span class="chv">${ic(I.chevRight, 10)}</span>Process</div>
          <div><span class="chv">${ic(I.chevRight, 10)}</span>Editor Description</div>
        </div>
        <div class="script">
          <span class="lbl">Script</span><span class="v">&lt;empt</span>
          <span class="ch">${ic(I.chevDown, 12)}</span>
          <span class="keyic m">${ic(I.key)}</span>
        </div>
        <div class="meta">${ic(I.plus)}<span>Add Metadata</span></div>
      </div>
    </section>`;
  }

  protected render(): unknown {
    return html`<div class="window">
      <header class="title">
        <div class="title-l">${godot(18)}<svg class="ic" width="16" height="16" viewBox="0 0 16 16"><path d="M8 5l4 4H4z"/></svg><svg class="ic" width="16" height="16" viewBox="0 0 16 16"><circle cx="8" cy="8" r="3"/></svg></div>
        <div>(*) WTTOL-Godot - Godot Engine</div>
        <div class="title-r">
          <svg class="ic" width="16" height="16" viewBox="0 0 16 16"><path d="M4 10h8v2H4z"/></svg>
          <svg class="ic" width="16" height="16" viewBox="0 0 16 16"><path fill-rule="evenodd" d="M4 4h8v8H4zm2 2v4h4V6z"/></svg>
          <svg class="ic" width="16" height="16" viewBox="0 0 16 16"><path d="M4.500 3L8 6.500 11.500 3 13 4.500 9.500 8l3.500 3.500-1.500 1.500L8 9.500 4.500 13 3 11.500 6.500 8 3 4.500z"/></svg>
        </div>
      </header>
      <nav class="menu">
        <div class="menus"><span>Scene</span><span>Project</span><span>Debug</span><span>Editor</span><span>Help</span></div>
        <div class="main-btns">
          <span class="main-btn">${ic(I.icon2d)}2D</span>
          <span class="main-btn on">${ic(I.icon3d)}3D</span>
          <span class="main-btn">${ic(I.scroll)}Script</span>
          <span class="main-btn">${ic(I.download)}AssetLib</span>
        </div>
        <div class="run">
          ${ib(I.play)}<span class="ib dim">${ic(I.pause)}</span><span class="ib dim">${ic(I.stop)}</span><i class="gap"></i>
          ${ib(I.clapPlay)}${ib(I.clapOpen)}<span class="ib" style="color:#a8a8a8">${ic(I.reel)}</span>
        </div>
        <div class="renderer">Forward+ ${ic(I.chevDown)}</div>
      </nav>
      <main class="grid">
        ${this.sceneDock()}
        ${this.centerDock()}
        ${this.inspectorDock()}
        ${this.fileDock()}
        ${this.animDock()}
      </main>
    </div>`;
  }
}
